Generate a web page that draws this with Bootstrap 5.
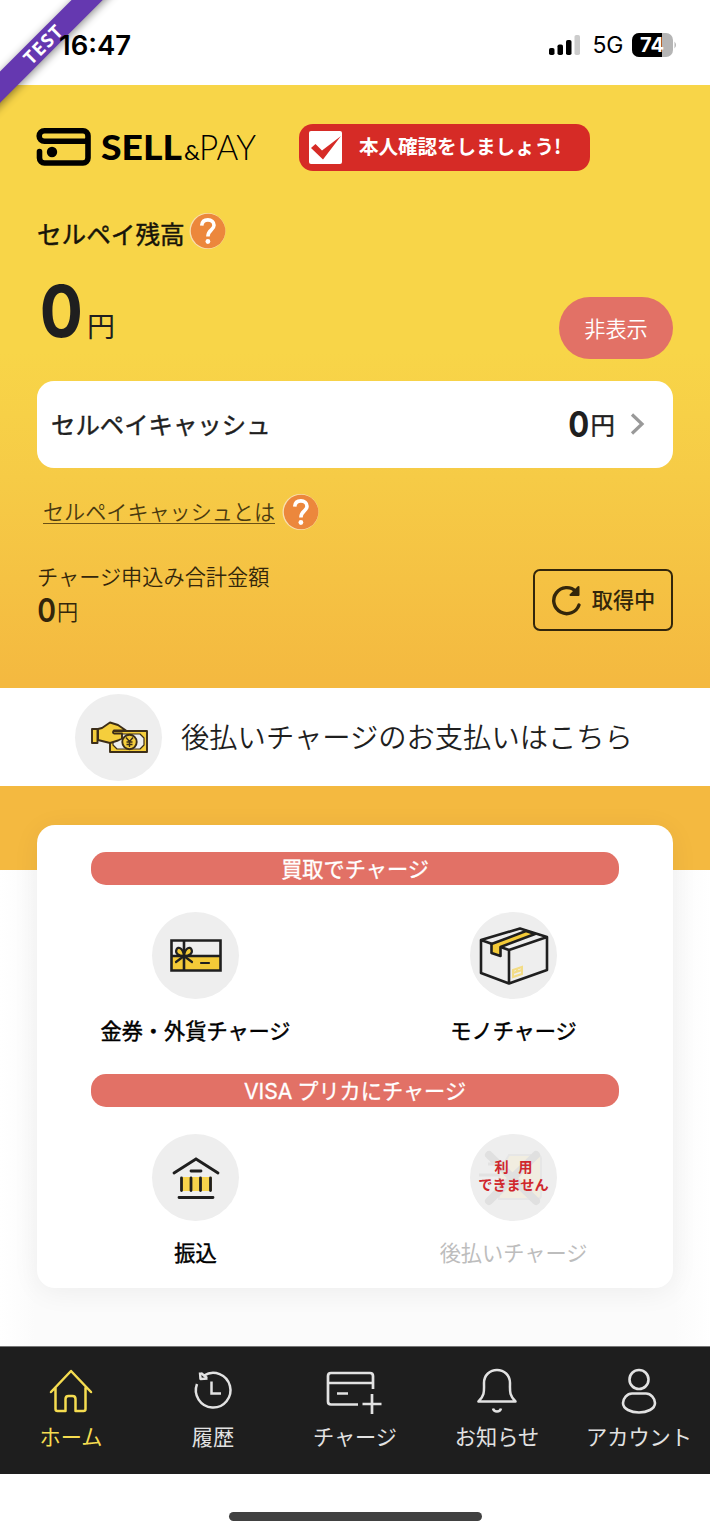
<!DOCTYPE html>
<html lang="ja">
<head>
<meta charset="utf-8">
<meta name="viewport" content="width=device-width, initial-scale=1">
<title>SELL&amp;PAY</title>
<link rel="stylesheet" href="https://cdn.jsdelivr.net/npm/bootstrap@5.3.0/dist/css/bootstrap.min.css">
<style>
body{font-family:Inter,"Noto Sans CJK JP",sans-serif;font-size:21.2px;line-height:30px;color:#1f1f1f;background:#fff;width:710px;height:1536px;overflow:hidden}
svg{display:block;flex:none;overflow:visible}
.jp{font-family:"Noto Sans CJK JP",sans-serif;white-space:nowrap}
.thin{font-weight:350}
.med{-webkit-text-stroke:.45px currentColor}
.status{height:85px;padding:5px 34px 0 59px;z-index:1}
.clock{font-size:27.5px;font-weight:600;color:#000}
.net{font-size:23px;color:#000;letter-spacing:-.3px}
.ribbon{left:-67px;top:33px;width:220px;height:21.5px;transform:rotate(-45deg);background:#6538b0;box-shadow:0 2px 9px rgba(0,0,0,.45);font:700 18.5px/22px "Open Sans",sans-serif;letter-spacing:1.5px;color:#fff;z-index:0}
.hero{height:785px;background:linear-gradient(#f8d548 0,#f8d548 34%,#f6cb46 50%,#f4b940 76%,#f4b940 100%)}
.hero-in{height:603px;padding:39px 37px 0}
.banner{width:291px;height:47px;border-radius:14px;background:#d62b26;color:#fff;font-size:19.6px;font-weight:700;margin-left:38px;padding-left:10px;gap:17px;letter-spacing:-.1px}
.title-row{height:36px;margin-top:42px;gap:5px}
.amount-row{height:62px;margin-top:48px}
.big{font-size:72px;font-weight:700;line-height:62px;width:50px;margin-top:-17px}
.digit{display:inline-block;transform:scaleX(.89)}
.yen-l{font-size:28px;line-height:56px}
.hide-btn{width:114px;height:62px;border-radius:31px;background:#e27166;color:#fff;border:0;padding-bottom:2px}
.cash{height:87px;margin-top:22px;border-radius:17px;background:#fff;padding:0 27px 2px 14px;font-size:24.4px}
.cash-num{font-size:35px;font-weight:700}
.link-row{height:36px;margin-top:26px;padding-left:6px;gap:8px}
.link-row a{color:#4a3a10;text-decoration:none;border-bottom:1.5px solid #6a5015;line-height:21px;padding-bottom:1px;font-size:21.1px}
.sum-row{margin-top:39px;height:62px;color:#33260b}
.get-btn{width:140px;height:62px;border:2px solid #33260b;border-radius:7px;font-weight:500;gap:11px;background:none;color:#33260b}
.strip{height:98px;background:#fff;padding-left:75px;font-size:28.3px;gap:19px}
.disc{width:87px;height:87px;border-radius:50%;background:#eee;flex:none}
.below{height:476px;background:linear-gradient(90deg,#fff,#fbfbfb 5%,#fbfbfb 95%,#fff)}
.menu-card{width:636px;height:463px;margin:0 auto;position:relative;top:-45px;border-radius:18px;background:#fff;box-shadow:0 4px 28px rgba(0,0,0,.06);padding:27px 54px 0}
.tag{height:33px;border-radius:15px;background:#e27166;color:#fff;line-height:31px;text-align:center;-webkit-text-stroke:.3px #fff}
.tile{width:318px;height:189px;padding-top:27px;color:#000}
.tile>.jp{margin-top:16px}
.tiles{margin:0 -54px;position:relative;left:-.5px}
.tile.off{color:#bdbdbd}
.no-use{color:#d0272d;font-size:14.2px;line-height:18px;font-weight:700;top:23px;left:0;width:87px}
.tabs{height:128px;background:#1e1e1e;border-top:1px solid #777;color:#e2e2e2}
.tab{width:142px;padding-top:20px}
.tab .jp{margin-top:6px}
.tab.on{color:#f5dc50}
.homebar{width:253px;height:9px;border-radius:5px;background:#414141;margin:38px auto 0}
</style>
</head>
<body class="position-relative">
<svg width="0" height="0" class="position-absolute"><defs>
<g id="help"><circle cx="17.500" cy="18" r="18" fill="#f8dfae"/><circle cx="18.100" cy="18" r="17.300" fill="#ec873c"/><path d="M11.700 12.700c.3-3.800 2.800-5.800 6.200-5.800 3.500 0 6.100 2.100 6.100 5.300 0 4.800-6.100 4.700-6.100 11.300" fill="none" stroke="#fff" stroke-width="3.600"/><circle cx="17.900" cy="28.500" r="2.400" fill="#fff"/></g>
</defs></svg>
<div class="ribbon position-absolute text-center">TEST</div>
<header class="status d-flex align-items-center position-relative">
  <span class="clock">16:47</span>
  <div class="ms-auto d-flex align-items-center">
    <svg width="33" height="22" viewBox="0 0 33 22"><rect x="2" y="14" width="5.500" height="7" rx="1.800"/><rect x="10.500" y="10.500" width="5.500" height="10.500" rx="1.800"/><rect x="19" y="6" width="5.500" height="15" rx="1.800"/><rect x="27.500" y="1" width="5.500" height="20" rx="1.800" fill="#ccc"/></svg>
    <span class="net ms-2 ps-1">5G</span>
    <svg class="ms-2" width="45" height="24" viewBox="0 0 45 24"><defs><clipPath id="bat"><rect x="1" width="41" height="24" rx="7"/></clipPath></defs><g clip-path="url(#bat)"><rect width="48" height="24" fill="#b5b5b5"/><rect width="31" height="24"/></g><path d="M43.500 8.500q3 3.500 0 7z" fill="#b5b5b5"/><text x="9" y="19" font-size="20" font-weight="700" fill="#fff" textLength="24">74</text></svg>
  </div>
</header>
<main>
<section class="hero">
  <div class="hero-in">
    <div class="d-flex align-items-center">
      <svg width="224" height="47" viewBox="0 0 224 47"><g fill="none" stroke="#000" stroke-width="5.600" stroke-linejoin="round" stroke-linecap="round"><path d="M48 17.300H7.500a5 5 0 0 1 0-10.600H46a5 5 0 0 1 5 5V34a5 5 0 0 1-5 5H7.500a5 5 0 0 1-5-5v-6.500"/></g><circle cx="15" cy="28" r="5.200"/><text x="64" y="36" font-family="Lato" font-weight="900" font-size="35" textLength="81" lengthAdjust="spacingAndGlyphs">SELL</text><text x="147" y="36" font-family="Lato" font-size="21" textLength="16" lengthAdjust="spacingAndGlyphs">&amp;</text><text x="162" y="36" font-family="Lato" font-weight="300" font-size="35" textLength="57" lengthAdjust="spacingAndGlyphs">PAY</text></svg>
      <div class="banner d-flex align-items-center jp"><svg width="33" height="33" viewBox="0 0 33 33"><rect width="33" height="33" rx="2" fill="#fff"/><path d="M2 17l4.500-4 6.500 6.500L32 5 14 28.500z" fill="#d62b26"/></svg><span class="pb-1">本人確認をしましょう!</span></div>
    </div>
    <div class="title-row d-flex align-items-center"><span class="jp med pt-1" style="font-size:24.6px;color:#17140a">セルペイ残高</span><svg width="36" height="36"><use href="#help"/></svg></div>
    <div class="amount-row d-flex"><span class="big"><span class="digit">0</span></span><span class="jp yen-l">円</span><button class="hide-btn jp thin ms-auto">非表示</button></div>
    <div class="cash d-flex align-items-center"><span class="jp med">セルペイキャッシュ</span><span class="cash-num ms-auto digit">0</span><span class="jp med">円</span><svg style="margin-left:15px" width="16" height="24" viewBox="0 0 16 24"><path d="M2 2.500 12 12 2 21.500" fill="none" stroke="#999" stroke-width="3.200"/></svg></div>
    <div class="link-row d-flex align-items-center"><a href="#" class="jp thin">セルペイキャッシュとは</a><svg width="36" height="36"><use href="#help"/></svg></div>
    <div class="sum-row d-flex"><div><div class="jp thin" style="margin-top:-8px">チャージ申込み合計金額</div><div class="d-flex align-items-center" style="height:40px"><b class="digit" style="font-size:32px;font-weight:600;margin-left:-1px">0</b><span class="jp thin">円</span></div></div>
      <button class="get-btn ms-auto d-flex align-items-center justify-content-center jp"><svg width="30" height="31" viewBox="0 0 30 31" fill="none" stroke="#33260b" stroke-width="3.400"><path d="M28 20A13 13 0 1 1 25 6.500" stroke-linecap="round"/><path d="M27.500 2v8h-8z" fill="#33260b" stroke-width="2" stroke-linejoin="round"/></svg><span style="padding-bottom:2px">取得中</span></button></div>
  </div>
  <div class="strip d-flex align-items-center"><div class="disc d-flex align-items-center justify-content-center"><svg width="57" height="34" viewBox="0 0 57 34" stroke="#3c2d18" stroke-width="1.900" stroke-linejoin="round"><path d="M20 11h37v21H20z" fill="#f5ce3c"/><path d="M27 14h23l4 4v7l-4 4H27l-4-4v-7z" fill="#eee" stroke-width="1.200"/><path d="M8 9l4-1 8-5.500 8 2.500 8 5.500H24q-2 2 0 3h8v5l-4 2-8 2.500L8 20z" fill="#f5ce3c"/><path d="M2 9h5.500v14H2z" fill="#f5ce3c"/><circle cx="39.500" cy="22" r="7.200" fill="#f5ce3c"/><path d="m36 17.500 3.500 4 3.500-4M39.500 21.500v5.500M36.500 22h6M36.500 24.500h6" fill="none" stroke-width="1.400"/></svg></div><span class="jp thin" style="padding-bottom:2px">後払いチャージのお支払いはこちら</span></div>
</section>
<section class="below">
  <div class="menu-card">
    <div class="tag jp">買取でチャージ</div>
    <div class="tiles d-flex">
      <div class="tile d-flex flex-column align-items-center"><div class="disc d-flex align-items-center justify-content-center"><svg width="52" height="33" viewBox="0 0 52 33"><path d="M1 17h50v15H1z" fill="#f3ca38"/><g fill="none" stroke="#1f1f1f" stroke-width="2.600"><path d="M1.500 1.500h49v30h-49zM1.500 17h49M14 1.500v30"/><path d="M14 17C8 17 5 14 6.500 10.500S13 9 14 17c1-8 6-10 7.500-6.500S20 17 14 17z" fill="#f3ca38" stroke-width="2.200"/><path d="m14 17-8 6m8-6 8 6M31 24h8" stroke-linecap="round" stroke-width="2.200"/></g></svg></div><span class="jp med">金券・外貨チャージ</span></div>
      <div class="tile d-flex flex-column align-items-center"><div class="disc d-flex align-items-center justify-content-center"><svg width="70" height="58" viewBox="0 0 70 58"><g fill="#eee" stroke="#1f1f1f" stroke-width="2.600" stroke-linejoin="round"><path d="M2 13 41 1.500 68 10v33L30 56.500 2 46zM2 13l28 10L68 10M30 23v33.500"/><path d="M12.500 17 47 4l9 3-34.500 13v9l-9-3z" fill="#f3ca38"/></g><path d="m34 43 9-3v7l-9 3zM34 46l9-3M38 42v3" fill="none" stroke="#f3dc85" stroke-width="2"/></svg></div><span class="jp med">モノチャージ</span></div>
    </div>
    <div class="tag jp"><span style="font-family:Inter">VISA</span> プリカにチャージ</div>
    <div class="tiles d-flex">
      <div class="tile d-flex flex-column align-items-center"><div class="disc d-flex align-items-center justify-content-center"><svg width="48" height="44" viewBox="0 0 48 44"><path d="M9 21h31v14H9z" fill="#f7d34c"/><path d="M2 17 24 3l22 14M19 15h10M9.500 22v12.500M19 22v12.500M28.500 22v12.500M38.500 22v12.500M7 41.500h34" fill="none" stroke="#1f1f1f" stroke-width="2.800" stroke-linecap="round"/></svg></div><span class="jp med">振込</span></div>
      <div class="tile d-flex flex-column align-items-center off"><div class="disc position-relative"><svg width="87" height="87" viewBox="0 0 87 87"><path d="M39 21h28q4 0 4 4v36q0 4-4 4H29V38z" fill="#f1ede0" stroke="#e6e6e6" stroke-width="2"/><path d="m19 21 47 46M66 21 19 67" stroke="#e0e0e0" stroke-width="8" stroke-linecap="round"/><path d="M9 41h20M18 30h12" stroke="#e2e2e2" stroke-width="3"/></svg><div class="no-use position-absolute jp text-center">利&nbsp;&nbsp; 用<br>できません</div></div><span class="jp">後払いチャージ</span></div>
    </div>
  </div>
</section>
</main>
<nav class="tabs d-flex">
  <div class="tab d-flex flex-column align-items-center on"><svg width="44" height="48" viewBox="0 0 44 48" fill="none" stroke="currentColor" stroke-width="2.500" stroke-linejoin="round" stroke-linecap="round"><path d="M2 25 22 4l20 21M6.500 21v21q0 2 2 2h8V32q0-3 3-3h4q3 0 3 3v12h8q2 0 2-2V21"/></svg><span class="jp">ホーム</span></div>
  <div class="tab d-flex flex-column align-items-center"><svg width="44" height="48" viewBox="0 0 44 48" fill="none" stroke="currentColor" stroke-width="2.500"><path d="M6 17A17.300 17.300 0 1 0 13 8.500M9 5.500l.5 6.500 7-.5" stroke-linejoin="round"/><path d="M10 6l6 5M20.500 14.500v12h9.500"/></svg><span class="jp">履歴</span></div>
  <div class="tab d-flex flex-column align-items-center"><svg width="58" height="48" viewBox="0 0 58 48" fill="none" stroke="currentColor" stroke-width="2.700"><path d="M32 37.500H5q-3 0-3-3V9q0-3 3-3h39q3 0 3 3v13M2 16h45M11 26.500h11M46 27v20M36.500 37h19"/></svg><span class="jp">チャージ</span></div>
  <div class="tab d-flex flex-column align-items-center"><svg width="44" height="48" viewBox="0 0 44 48" fill="none" stroke="currentColor" stroke-width="2.500" stroke-linejoin="round"><path d="M3.500 34.500h37C34 28 35 24 35 16c0-8-6-13-13-13S9 8 9 16c0 8 1 12-5.500 18.500zM18 41.500c1 4 7 4 8 0"/></svg><span class="jp">お知らせ</span></div>
  <div class="tab d-flex flex-column align-items-center"><svg width="44" height="48" viewBox="0 0 44 48" fill="none" stroke="currentColor" stroke-width="2.600"><circle cx="22" cy="12.500" r="9.500"/><path d="M15 26.500h14c5 0 9 5 9 9.500 0 6-8 9.500-16 9.500S6 42 6 36c0-4.500 4-9.500 9-9.500z"/></svg><span class="jp">アカウント</span></div>
</nav>
<div class="homebar"></div>
<script src="https://cdn.jsdelivr.net/npm/bootstrap@5.3.0/dist/js/bootstrap.bundle.min.js"></script>
</body>
</html>
